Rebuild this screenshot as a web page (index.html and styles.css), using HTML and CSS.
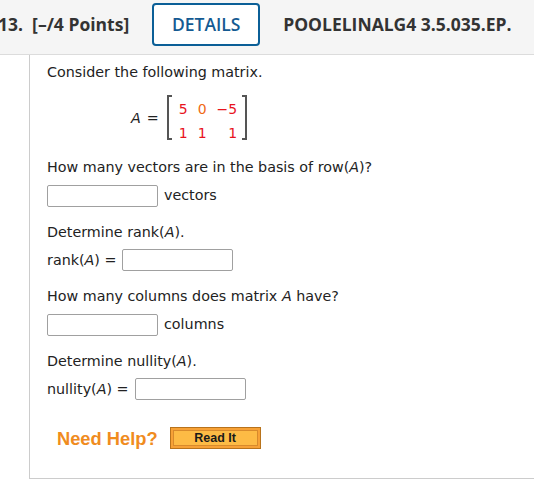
FILE: index.html
```html
<!DOCTYPE html>
<html lang="en">
  <head>
    <meta charset="UTF-8" />
    <title>Question 13</title>
    <link rel="stylesheet" href="styles.css">
  </head>
  <body>
    <!-- 題目標頭 -->
    <div class="head">
      <div class="num">13.&nbsp; [–/4 Points]</div>
      <div class="details">DETAILS</div>
      <div class="code">POOLELINALG4 3.5.035.EP.</div>
    </div>

    <!-- 題目內容 -->
    <div class="body">
      <p class="line first">Consider the following matrix.</p>

      <div class="matrix_row">
        <span class="var">A</span>
        <span class="eq">=</span>
        <div class="matrix">
          <div class="br br_l"></div>
          <div class="cells">
            <span>5</span><span class="orange">0</span><span>−5</span>
            <span>1</span><span>1</span><span>1</span>
          </div>
          <div class="br br_r"></div>
        </div>
      </div>

      <p class="line">How many vectors are in the basis of row(<i>A</i>)?</p>
      <div class="answer">
        <input class="box" type="text">
        <span>vectors</span>
      </div>

      <p class="line">Determine rank(<i>A</i>).</p>
      <div class="answer">
        <span>rank(<i>A</i>) =</span>
        <input class="box" type="text">
      </div>

      <p class="line">How many columns does matrix <i>A</i> have?</p>
      <div class="answer">
        <input class="box" type="text">
        <span>columns</span>
      </div>

      <p class="line">Determine nullity(<i>A</i>).</p>
      <div class="answer">
        <span>nullity(<i>A</i>) =</span>
        <input class="box" type="text">
      </div>

      <!-- 求助 -->
      <div class="help">
        <span class="need">Need Help?</span>
        <span class="read">Read It</span>
      </div>
    </div>
  </body>
</html>
```

FILE: styles.css
```css
* {
  margin: 0;
  padding: 0;
  box-sizing: border-box;
}

body {
  background: #fff;
  overflow: hidden;
}

/* ---------------------------- 標頭 ---------------------------- */
.head {
  display: flex;
  align-items: center;
  gap: 23px;

  height: 55px;
  padding-bottom: 6px;

  background: #f5f5f5;
  border-bottom: 1px solid #dcdcdc;

  font-family: "Open Sans", sans-serif;
  font-size: 17.5px;
  font-weight: 700;
  color: #333;
  white-space: nowrap;
}

.num {
  margin-left: -2px;
}

.details {
  display: flex;
  align-items: center;
  justify-content: center;

  width: 108px;
  height: 43px;

  border: 2px solid #0b5f97;
  border-radius: 4px;
  background: #fff;

  font-weight: 600;
  color: #145a92;
}

/* ---------------------------- 內容 ---------------------------- */
.body {
  margin-left: 29px;
  height: 424px;
  padding: 9px 0 0 17px;

  border-left: 1px solid #ccc;
  border-bottom: 1px solid #ccc;

  font-family: "DejaVu Sans", Verdana, sans-serif;
  font-size: 14.3px;
  line-height: 17px;
  color: #222;
}

.line {
  margin-top: 17px;
}

.line.first {
  margin-top: 0;
}

/* ---------------------------- 矩陣 ---------------------------- */
.matrix_row {
  display: flex;
  align-items: center;
  margin: 14px 0 0 84px;
}

.var {
  font-style: italic;
}

.eq {
  margin: 0 8px 0 6px;
}

.matrix {
  display: flex;
  margin-bottom: 2px;
}

.br {
  width: 5px;
  height: 45px;
  border: 2px solid #555;
}

.br_l {
  border-right: none;
}

.br_r {
  border-left: none;
}

.cells {
  display: grid;
  grid-template-columns: auto auto auto;
  column-gap: 10px;
  row-gap: 9px;
  padding: 7px 5px 0 7px;

  font-size: 14px;
  line-height: 14px;
  color: #e8141e;
  text-align: right;
}

.orange {
  color: #f06a14;
}

/* ---------------------------- 作答 ---------------------------- */
.answer {
  display: flex;
  align-items: center;
  gap: 6px;
  margin-top: 8.5px;
}

.box {
  width: 111px;
  height: 22px;
  border: 1px solid #a0a0a0;
  border-radius: 2px;
  background: #fff;
}

/* ---------------------------- 求助 ---------------------------- */
.help {
  display: flex;
  align-items: center;
  gap: 12px;
  margin: 27px 0 0 10px;
}

.need {
  font-family: "Liberation Sans", Arial, sans-serif;
  font-size: 18.3px;
  font-weight: 700;
  color: #f08c1e;
}

.read {
  display: flex;
  align-items: center;
  justify-content: center;

  width: 91px;
  height: 22px;

  border: 1px solid #b8731c;
  box-shadow: inset 0 0 0 2px #f7a136, inset 0 0 0 3px #d88a2c;
  background: #fdbb45;

  font-family: "Liberation Sans", Arial, sans-serif;
  font-size: 12.5px;
  font-weight: 700;
  color: #1a1a1a;
}
```
